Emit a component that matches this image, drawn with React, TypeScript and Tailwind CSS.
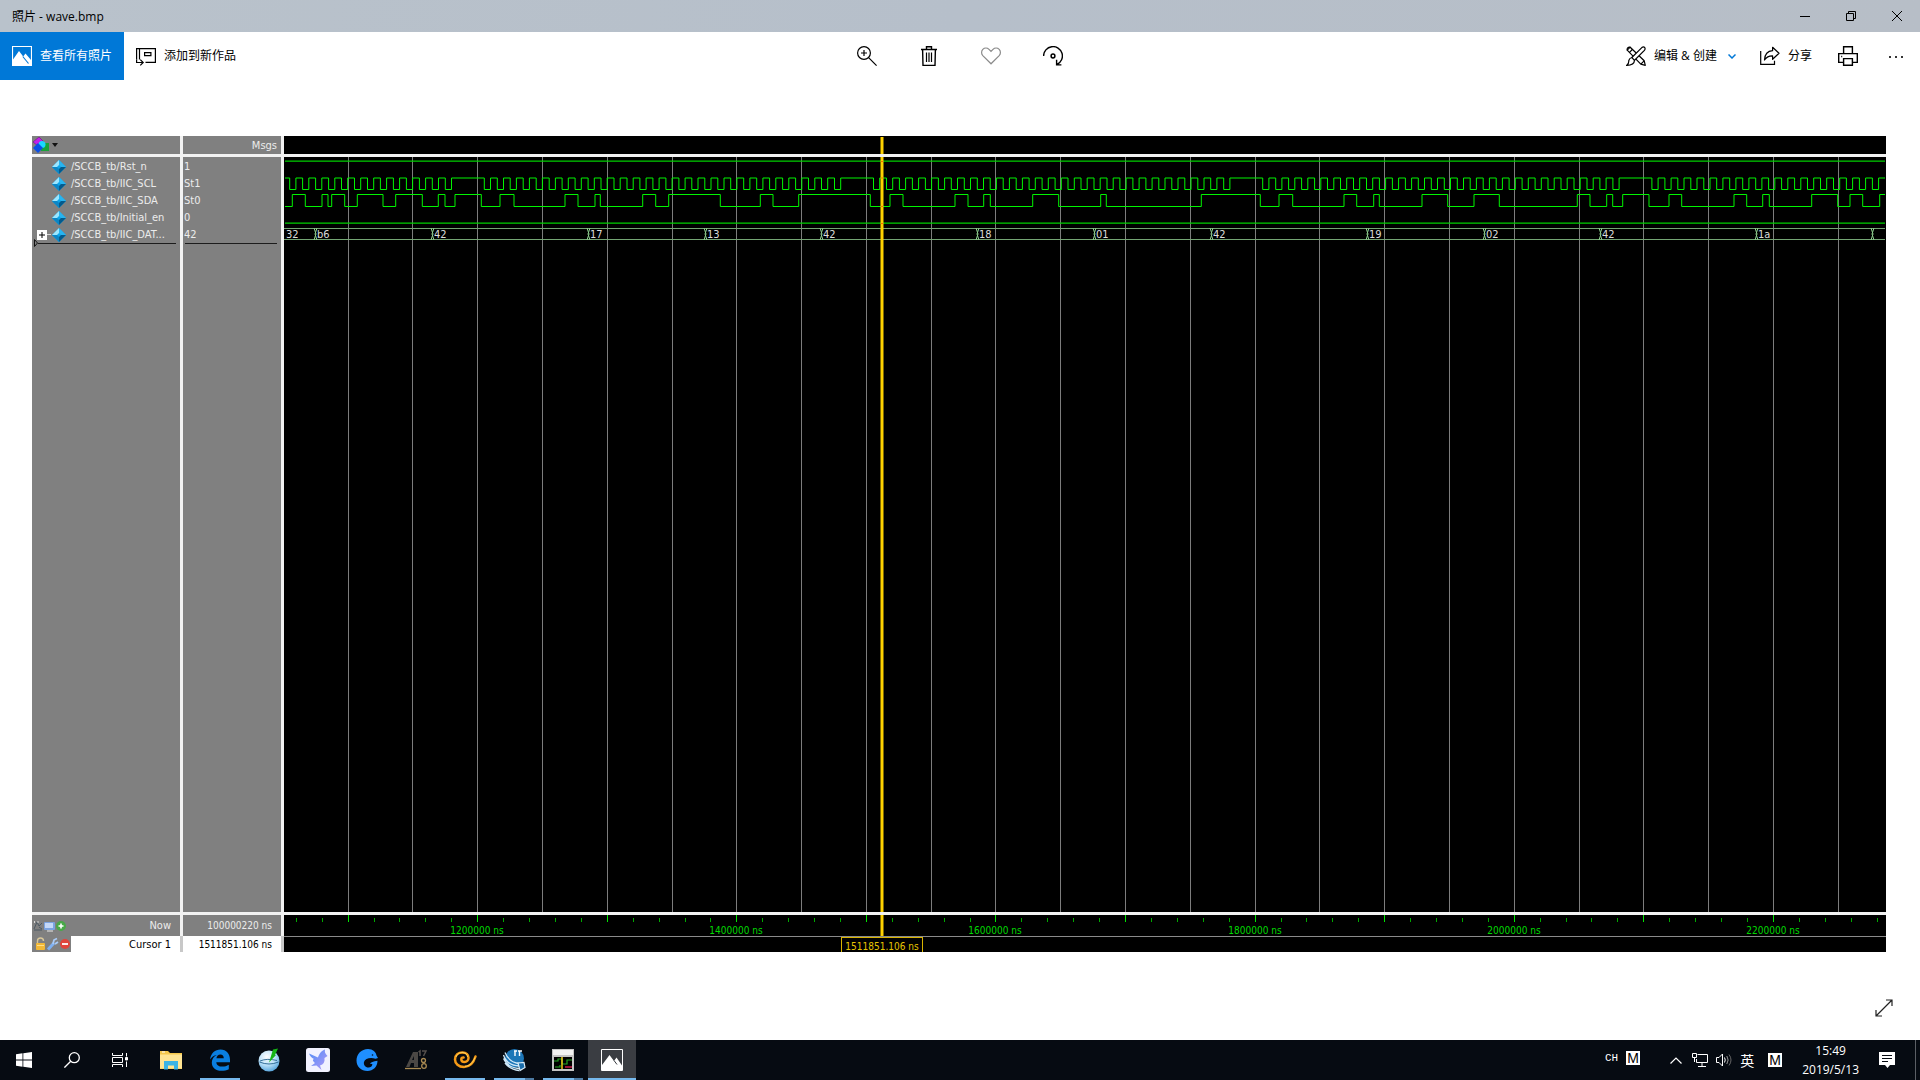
import type { ReactNode } from "react";

const WAVE_FONT = "font-['DejaVu_Sans_Condensed','DejaVu_Sans',sans-serif]";

/* ---------- wave data ---------- */

const ORIGIN = 284;
const GRID = Array.from({ length: 24 }, (_, i) => Math.floor(64.12 + i * 64.785) + 0.5);
const TICKS = Array.from({ length: 62 }, (_, i) => Math.floor(12.292 + i * 25.914) + 0.5);
const CURSOR_X = 598;

const SDA_EDGES = [
  292.3, 305.3, 322, 328, 331.7, 344.7, 357.3, 383, 395.7, 422.3, 438.3, 445, 455, 481.3, 500, 514, 565, 578, 595,
  600.3, 642.7, 655.7, 668.7, 720.3, 760.3, 773, 798.7, 870.3, 890, 903, 955, 968, 983.7, 990.3, 1032.7, 1058.7,
  1100.7, 1106.3, 1201.3, 1260.3, 1279, 1292.7, 1344, 1356.7, 1373.7, 1379.3, 1422, 1447.7, 1474, 1499.3, 1577.3,
  1590, 1606.7, 1612.7, 1622.7, 1649, 1669, 1681.7, 1734, 1746.7, 1762.7, 1769.3, 1811.7, 1837.7, 1850, 1862.7, 1879.7,
].map((x) => x - ORIGIN);

const SCL_EDGES: number[] = [];
for (let frame = -1; frame < 4; frame++) {
  for (let k = 0; k < 28; k++) {
    const fall = 200.3 + frame * 389.2 + k * 12.97;
    if (fall > 2 && fall < 1601) SCL_EDGES.push(fall, fall + 6.2);
  }
}

const BUS: [number, string][] = [
  [31, "b6"],
  [148, "42"],
  [304, "17"],
  [421, "13"],
  [537, "42"],
  [693, "18"],
  [810, "01"],
  [927, "42"],
  [1083, "19"],
  [1200, "02"],
  [1316, "42"],
  [1472, "1a"],
  [1588, ""],
];

const TIMES: [number, string][] = [
  [193, "1200000 ns"],
  [452, "1400000 ns"],
  [711, "1600000 ns"],
  [971, "1800000 ns"],
  [1230, "2000000 ns"],
  [1489, "2200000 ns"],
];

function trace(edges: number[], startHigh: boolean, high: number, low: number, end: number) {
  let level = startHigh;
  let d = `M1 ${level ? high : low}`;
  for (const x of edges) {
    level = !level;
    d += `H${x.toFixed(1)}V${level ? high : low}`;
  }
  return d + `H${end}`;
}

const SIGNALS = [
  { name: "/SCCB_tb/Rst_n", value: "1" },
  { name: "/SCCB_tb/IIC_SCL", value: "St1" },
  { name: "/SCCB_tb/IIC_SDA", value: "St0" },
  { name: "/SCCB_tb/Initial_en", value: "0" },
  { name: "/SCCB_tb/IIC_DAT...", value: "42", bus: true },
];

/* ---------- toolbar icons ---------- */

function Icon({ children, className = "" }: { children: ReactNode; className?: string }) {
  return (
    <svg viewBox="0 0 20 20" className={`size-5 shrink-0 ${className}`} fill="none" stroke="currentColor" strokeWidth="1.2" aria-hidden="true">
      {children}
    </svg>
  );
}

const PhotoIcon = () => (
  <Icon>
    <path d="M.5 .5h19v19H.5z" />
    <path d="M1 13.500 7 5l4.200 5.600L13.500 7.500 19 14v5.500H1z" fill="currentColor" stroke="none" />
    <path d="M10.800 10.500 16.500 17.500" stroke="#0078d7" strokeWidth="1.100" />
  </Icon>
);
const AddIcon = () => (
  <Icon>
    <path d="M.6 13.500V2.600H3.500V13.500M3.500 2.600H19.400V16.400H9.500" />
    <path d="M8.600 6.600h6.300v3H8.600z" />
    <path d="M.6 13.500v3H7M4.300 13.600 7.200 16.500 4.300 19.400" />
  </Icon>
);
const ZoomIcon = () => (
  <Icon>
    <circle cx="7" cy="7" r="6.400" />
    <path d="M11.600 11.600 19.600 19.600M4 7h6M7 4v6" />
  </Icon>
);
const TrashIcon = () => (
  <Icon>
    <path d="M2 3.500H18M7.500 3.500V.7h5v2.800M3.600 3.500 4 19.400H16L16.400 3.500" strokeWidth="1.400" />
    <path d="M7.500 6.500v9.500M10 6.500v9.500M12.500 6.500v9.500" />
  </Icon>
);
const HeartIcon = () => (
  <Icon className="text-[#8a8a8a]">
    <path d="M10 17.800 1.800 9.700C.2 8 .2 5 1.800 3.400 3.500 1.700 6.300 1.700 8 3.400L10 5.400 12 3.400C13.700 1.700 16.500 1.700 18.200 3.400 19.800 5 19.800 8 18.200 9.700Z" />
  </Icon>
);
const RotateIcon = () => (
  <Icon>
    <path d="M.6 10A9.400 9.400 0 1 1 14 18.500M13.600 13.800V18.900H18.400" strokeWidth="1.400" />
    <circle cx="10" cy="10" r="1.900" strokeWidth="1.500" />
  </Icon>
);
const EditIcon = () => (
  <Icon>
    <path d="M1.200 4.200 4.200 1.200 18.200 14.800 19.300 19.300 14.800 18.200Z" strokeLinejoin="round" />
    <path d="M1.200 4.200Q.6 1 4.200 1.200M3.500 6.300 6.300 3.500M14.800 18.200 18.200 14.800" />
    <path
      d="M5.800 11.500 15.800 1.600Q17.500.4 18.700 1.500 19.600 2.800 18.400 4.400L8.500 14.300Q8.300 19.300.8 19.300 3 17.500 2.800 14.500 3.500 12 5.800 11.500Z"
      fill="#fff"
    />
    <path d="M5.800 11.500 8.500 14.300" />
  </Icon>
);
const ShareIcon = () => (
  <Icon>
    <path d="M.7 5V18.400H14.500V14.800" />
    <path d="M12.600 1.300 19 7.300 12.600 13.300V9.900C9 9.800 6.600 10.800 4.500 14 4.800 8.500 7.500 5 12.600 4.700Z" strokeLinejoin="round" />
  </Icon>
);
const PrintIcon = () => (
  <Icon>
    <path d="M5.600 7.600V.7h8.800V7.600M5.600 16.400H.7V7.600H19.300V16.400H14.400M5.600 12.600h8.800V19.300H5.600zM3.200 10.500h1" strokeWidth="1.400" />
  </Icon>
);

/* ---------- wave window pieces ---------- */

const Diamond = () => (
  <svg viewBox="0 0 16 16" className="size-4 shrink-0" aria-hidden="true">
    <path d="M8 1 15 8 8 15 1 8Z" fill="#0aa5ea" />
    <path d="M8 1 1 8H6L8 6Z" fill="#9be6ff" />
    <path d="M8 1 15 8H10L8 6Z" fill="#28b4f0" />
    <path d="M1 8 8 15V10L6 8Z" fill="#0b86c6" />
    <path d="M15 8 8 15V10L10 8Z" fill="#045a8c" />
  </svg>
);

function WavePane() {
  return (
    <svg className="block h-full w-full" role="img" aria-label="Signal waveforms">
      {GRID.map((x) => (
        <line key={x} x1={x} x2={x} y1="0" y2="100%" stroke="#7d7d7d" />
      ))}
      <g fill="none" stroke="#00f400">
        <path d="M1 4.200H1601" stroke="#00d000" strokeWidth="1.200" />
        <path d={trace(SCL_EDGES, true, 21, 32.5, 1601)} />
        <path d={trace(SDA_EDGES, false, 37.5, 49.5, 1601)} />
        <path d="M1 66.200H1601" stroke="#00d000" strokeWidth="1.200" />
      </g>
      <path d="M0 71.500H1601M0 82.500H1601" stroke="#74a574" strokeWidth="1.200" />
      {BUS.map(([x, label]) => (
        <g key={x}>
          <path d={`M${x - 1} 71L${x + 1} 77L${x - 1} 83M${x + 2} 71L${x} 77L${x + 2} 83`} stroke="#8fd08f" fill="none" />
          <text x={x + 2} y="81" className={`${WAVE_FONT} text-[11px]`} fill="#dcdcdc">
            {label}
          </text>
        </g>
      ))}
      <text x="2" y="81" className={`${WAVE_FONT} text-[11px]`} fill="#dcdcdc">
        32
      </text>
      <rect x={CURSOR_X - 1.5} y="0" width="3" height="100%" fill="#ffd200" />
      <path d={`M${CURSOR_X - 1} 4.500h2M${CURSOR_X - 1} 21h2M${CURSOR_X - 1} 49.500h2M${CURSOR_X - 1} 66.500h2`} stroke="#ff6a00" />
    </svg>
  );
}

function Ruler() {
  return (
    <svg className="block h-full w-full" role="img" aria-label="Time scale">
      {TICKS.map((x, i) => (
        <line key={x} x1={x} x2={x} y1={i % 5 === 2 ? 0 : 3} y2="7" stroke={i % 5 === 2 ? "#00e600" : "#00a800"} />
      ))}
      {TIMES.map(([x, label]) => (
        <text key={x} x={x} y="19" textAnchor="middle" className={`${WAVE_FONT} text-[10px]`} fill="#00d800">
          {label}
        </text>
      ))}
      <rect x={CURSOR_X - 1.5} y="0" width="3" height="100%" fill="#ffd200" />
    </svg>
  );
}

function WaveWindow() {
  return (
    <section
      aria-label="wave.bmp"
      className={`grid flex-1 grid-cols-[151px_101px_minmax(0,1fr)] grid-rows-[18px_1fr_24px_16px] bg-[#808080] text-[11px] leading-[17px] text-[#ececec] ${WAVE_FONT}`}
    >
      {/* header */}
      <div className="flex items-center gap-[3px] border-r-3 border-[#f2f2f2] pl-px">
        <svg viewBox="0 0 16 16" className="size-4" aria-hidden="true">
          <path d="M0 5 6 0 11 5 5 9Z" fill="#c21fe8" stroke="#5a1070" strokeWidth=".5" />
          <path d="M8 6h8v8H8z" fill="#19a23a" />
          <circle cx="9" cy="7.500" r="3.500" fill="#19d8ff" />
          <path d="M0 11 5 6 10 11 5 16Z" fill="#0a4fe6" />
        </svg>
        <svg viewBox="0 0 6 4" className="h-1 w-1.5" aria-hidden="true">
          <path d="M0 0h6L3 4z" fill="#111" />
        </svg>
      </div>
      <div className="border-r-3 border-[#f2f2f2] pr-1 text-right leading-[19px]">Msgs</div>
      <div className="bg-black">
        <svg className="block h-full w-full" aria-hidden="true">
          <rect x={CURSOR_X - 1.5} y="1" width="3" height="100%" fill="#ffd200" />
        </svg>
      </div>

      {/* signals */}
      <div className="border-t-3 border-r-3 border-[#f2f2f2]">
        <ul className="pt-px">
          {SIGNALS.map((s) => (
            <li key={s.name} className="flex h-[17px] items-center">
              <span className="flex w-[19px] shrink-0 items-center pl-[5px]">
                {s.bus && (
                  <>
                    <button aria-label="Expand" className="flex size-[10px] shrink-0 items-center justify-center bg-white">
                      <svg viewBox="0 0 6 6" className="size-1.5">
                        <path d="M0 3H6M3 0V6" stroke="#000" />
                      </svg>
                    </button>
                    <span className="h-px w-[5px] bg-[#d8d8d8]" />
                  </>
                )}
              </span>
              <Diamond />
              <span className="pl-1 whitespace-nowrap">{s.name}</span>
            </li>
          ))}
        </ul>
        <div className="-mt-1 flex items-center pr-1">
          <svg viewBox="0 0 4 8" className="ml-0.5 h-2 w-1" aria-hidden="true">
            <path d="M.5.500 3.500 4 .5 7.500Z" fill="none" stroke="#111" />
          </svg>
          <span className="h-px flex-1 bg-[#1c1c1c]" />
        </div>
      </div>
      <div className="border-t-3 border-r-3 border-[#f2f2f2]">
        <ul className="pt-px pl-px">
          {SIGNALS.map((s) => (
            <li key={s.name} className="h-[17px]">
              {s.value}
            </li>
          ))}
        </ul>
        <div className="mr-1 ml-0.5 h-px bg-[#1c1c1c]" />
      </div>
      <div className="min-h-0 border-t-3 border-[#f2f2f2] bg-black">
        <WavePane />
      </div>

      {/* now */}
      <div className="flex items-center justify-between border-t-3 border-r-3 border-[#f2f2f2] pr-[9px]">
        <svg viewBox="0 0 36 12" className="ml-px h-3 w-9" aria-hidden="true">
          <path d="M1 9 4 2 6 6 9 3M1 10H9M6 7 9 9" stroke="#4d5963" fill="none" />
          <path d="M1.500 1v2M5 1v2" stroke="#d8d8d8" />
          <rect x="11" y="2" width="11" height="8" rx="1" fill="#7ba3e0" />
          <rect x="12" y="3" width="8" height="5" fill="#c4d8f8" />
          <path d="M14 11h6" stroke="#e8e8e8" />
          <circle cx="28" cy="6" r="5" fill="#48a848" />
          <path d="M25.500 6h5M28 3.500v5" stroke="#fff" strokeWidth="1.600" />
        </svg>
        <span>Now</span>
      </div>
      <div className="flex items-center justify-end border-t-3 border-r-3 border-[#f2f2f2] pr-[9px] text-[10px]">100000220 ns</div>
      <div className="border-t-3 border-[#f2f2f2] bg-black">
        <Ruler />
      </div>

      {/* cursor */}
      <div className="flex items-center justify-between border-r-3 border-[#c8c8c8] bg-white pr-[9px] text-black">
        <span className="flex h-full w-[39px] items-center bg-[#808080] pl-[3px]">
          <svg viewBox="0 0 36 14" className="h-3.5 w-9" aria-hidden="true">
            <path d="M2.500 7V4a3 3 0 0 1 6 0" stroke="#d8c79a" strokeWidth="1.400" fill="none" />
            <rect x="1" y="6" width="9" height="7" rx="1" fill="#f2b838" />
            <path d="M2 8.500H9" stroke="#ffe08a" />
            <path d="M13 12.500 19 6" stroke="#7fb0f0" strokeWidth="3" />
            <path d="M18 7 19 3 22 1.500M20 7 23 5" stroke="#a9cbf7" strokeWidth="1.800" fill="none" />
            <circle cx="30" cy="7" r="5" fill="#e0453c" />
            <path d="M27 7h6" stroke="#fff" strokeWidth="1.800" />
          </svg>
        </span>
        <span>Cursor 1</span>
      </div>
      <div className="flex items-center justify-end border-r-3 border-[#c8c8c8] bg-white pr-[9px] text-[10px] text-black">1511851.106 ns</div>
      <div className="overflow-hidden border-t border-[#8a8a8a] bg-black">
        <svg className="block h-full w-full" role="img" aria-label="Cursor position">
          <rect x="557.5" y=".5" width="81" height="18" fill="none" stroke="#d9b400" />
          <text x={CURSOR_X} y="13" textAnchor="middle" className="text-[10px]" fill="#e6c400">
            1511851.106 ns
          </text>
        </svg>
      </div>
    </section>
  );
}

/* ---------- taskbar ---------- */

function Art({ children }: { children: ReactNode }) {
  return (
    <svg viewBox="0 0 24 24" className="size-6" aria-hidden="true">
      {children}
    </svg>
  );
}

const APPS: { name: string; state?: "open" | "multi" | "active"; art: ReactNode }[] = [
  {
    name: "文件资源管理器",
    art: (
      <Art>
        <path d="M1 3h8l2 2h12v16H1z" fill="#f5c84c" />
        <path d="M1 6.500h22v14H1z" fill="#ffe593" />
        <path d="M3 4h3" stroke="#fff" />
        <path d="M5 21.500V13h14v8.500h-4V17.500H9v4z" fill="#3bb4e5" />
      </Art>
    ),
  },
  {
    name: "Edge",
    state: "open",
    art: (
      <Art>
        <path
          d="M2 11.500C3 5 7 1.500 12.500 1.500 18.500 1.500 22 5.800 22 11.800V14.200H8.300C8.500 17.200 11 18.600 14.200 18.600 16.800 18.600 18.800 17.900 20.800 16.700V21.200C18.500 22.300 16.200 22.800 13.400 22.800 7.500 22.800 3.800 19.500 3.800 14.500 3.800 11 5.700 8.300 8.800 6.900 5.800 7.300 3.500 9 2 11.500ZM8.400 10.200H15.800C15.800 7.700 14.500 6.400 12.400 6.400 10.200 6.400 8.800 7.900 8.400 10.200Z"
          fill="#0a7fe0"
        />
      </Art>
    ),
  },
  {
    name: "Browser",
    art: (
      <Art>
        <defs>
          <radialGradient id="ball" cx=".4" cy=".3" r=".8">
            <stop offset="0" stopColor="#fff" />
            <stop offset=".5" stopColor="#b9e0f8" />
            <stop offset="1" stopColor="#3f97d6" />
          </radialGradient>
        </defs>
        <circle cx="12" cy="13" r="10.500" fill="url(#ball)" />
        <path d="M2.500 14Q12 18 21.500 14M3 13Q10 10 20 12.500" stroke="#25628f" fill="none" strokeWidth=".9" />
        <path d="M12 14.500 16 1.500 21 .5 18 7H19Z" fill="#16b416" />
      </Art>
    ),
  },
  {
    name: "Thunder",
    art: (
      <Art>
        <defs>
          <linearGradient id="bird" x1="0" y1="0" x2="1" y2="1">
            <stop offset="0" stopColor="#4c8cf5" />
            <stop offset="1" stopColor="#b49af8" />
          </linearGradient>
        </defs>
        <rect width="24" height="24" rx="2.500" fill="#f1f2ff" />
        <path d="M3 5.500 12 9.500C13 6 15.500 2.500 19 1.500 18.500 4 19 5.500 21.500 8L18.500 10C19 14 17.500 16.500 14 17.500L15.500 22 10.500 17.500 5 18 9 15C6.500 13 6.500 11.500 8 11 5.500 10 4 8 3 5.500Z" fill="url(#bird)" />
      </Art>
    ),
  },
  {
    name: "Dolphin",
    art: (
      <Art>
        <path d="M13 1C18 1 21 4 21.500 7.500L23 10 20.500 10.800C15.500 9 10 10.500 9 14 8.300 17 10.500 19.800 14 19.500 16.500 19 17.500 17.500 17.300 16L15 15.800Q16 13.800 22.500 12.800C22.500 19 18 23 12.500 23 6 23 1.500 18.500 1.500 12.500 1.500 6 6.500 1 13 1Z" fill="#1f8fff" />
        <circle cx="17.500" cy="7" r=".8" fill="#06101c" />
      </Art>
    ),
  },
  {
    name: "Altium",
    art: (
      <Art>
        <path d="M2 19 9 4H14V19H10V15H7L5.500 19ZM8 12H10V8Z" fill="#4b4845" fillRule="evenodd" />
        <path d="M14.500 4 16 3V8M18 3h4L19.500 8" stroke="#55504d" strokeWidth="1.500" fill="none" />
        <circle cx="19.500" cy="12.500" r="2" fill="none" stroke="#a98a52" strokeWidth="1.300" />
        <circle cx="20" cy="18" r="2.300" fill="none" stroke="#a98a52" strokeWidth="1.300" />
        <path d="M1 20.500H17" stroke="#a98a52" strokeWidth="1.300" />
      </Art>
    ),
  },
  {
    name: "Everything",
    state: "open",
    art: (
      <Art>
        <path
          d="M22.500 8.500C20.500 15 17 19 11 19 5.500 19 2 15.500 2 11.500 2 7 5.500 4.500 9.500 4.500 13.500 4.500 15.500 7 15.500 9.800 15.500 12.500 13.500 14 11.500 14 9.500 14 8.300 12.800 8.300 11.200 8.300 10 9.400 9.200 10.600 9.500"
          fill="none"
          stroke="#f59a16"
          strokeWidth="2.500"
          strokeLinecap="round"
        />
        <path d="M3 9C4 6 7 4 10 4.500 13 4.800 14.500 7 14.500 9M22 9.500C20 14.500 17 18 12 18.300" fill="none" stroke="#ffd35c" strokeWidth="1" />
      </Art>
    ),
  },
  {
    name: "Quartus",
    state: "multi",
    art: (
      <Art>
        <circle cx="12.500" cy="10.500" r="9.500" fill="#1d77b8" />
        <path d="M12 3h3M13 3v5M16 3h4M17.500 3v5" stroke="#fff" strokeWidth="1.400" />
        <path d="M1.500 7C4 15 10 18 18 18M1.500 10.500C4.500 17 10 20 17 20.500M3 15C6 19 11 22 17 22.500M3 4.500C6 12 11 15 18 15.500" stroke="#cfe8f8" strokeWidth="1.300" fill="none" />
        <path d="M16 15 22 14.500 23 19.500 18 22.500Z" fill="#1b6eac" stroke="#d8ecf8" strokeWidth="1.200" />
      </Art>
    ),
  },
  {
    name: "ModelSim",
    state: "multi",
    art: (
      <Art>
        <path d="M1 1h22v22H1z" fill="#c4c4c4" />
        <path d="M2 2h20v5H2z" fill="#f2f2f2" />
        <path d="M3 9h18v12H3z" fill="#000" />
        <path d="M3 13h4v-2h4v5h5v-4h5M4 19h5v-2" stroke="#24a824" fill="none" strokeWidth="1.200" />
        <path d="M11 9v12" stroke="#f0c818" strokeWidth="1.500" />
        <path d="M14 19h7" stroke="#c81848" strokeWidth="1.500" />
      </Art>
    ),
  },
  {
    name: "照片",
    state: "active",
    art: (
      <Art>
        <path d="M1.500 1.500h21v21h-21z" fill="#3a3d42" stroke="#fff" />
        <path d="M2 17 9.500 7 14 13 16.500 9.500 22 17.500V22H2z" fill="#fff" />
        <path d="M14 12.500 17 16.500" stroke="#3a3d42" />
      </Art>
    ),
  },
];

function TaskApp({ app }: { app: (typeof APPS)[number] }) {
  return (
    <button aria-label={app.name} className={`relative flex h-10 w-12 items-center justify-center ${app.state === "active" ? "bg-[#3a3d42]" : ""}`}>
      {app.art}
      {app.state === "open" && <span className="absolute bottom-0 left-1 h-0.5 w-10 bg-[#76b9ed]" />}
      {app.state === "multi" && <span className="absolute bottom-0 left-1 h-0.5 w-10 border-r-9 border-[#4d7ba3] bg-[#76b9ed]" />}
      {app.state === "active" && <span className="absolute inset-x-0 bottom-0 h-0.5 bg-[#76b9ed]" />}
    </button>
  );
}

function Taskbar() {
  return (
    <footer className="flex h-10 items-center bg-[#060b12] text-white">
      <button aria-label="开始" className="flex h-10 w-12 items-center justify-center">
        <svg viewBox="0 0 16 16" className="size-4" fill="#fff">
          <path d="M0 2.200 6.500 1.300V7.500H0zM7.300 1.200 16 0V7.500H7.300zM0 8.400H6.500V14.700L0 13.800zM7.300 8.400H16V16L7.300 14.800z" />
        </svg>
      </button>
      <button aria-label="搜索" className="flex h-10 w-12 items-center justify-center">
        <svg viewBox="0 0 16 16" className="size-4" fill="none" stroke="#fff" strokeWidth="1.300">
          <circle cx="10.300" cy="5.700" r="5" />
          <path d="M6.700 9.300.4 15.600" />
        </svg>
      </button>
      <button aria-label="任务视图" className="flex h-10 w-12 items-center justify-center">
        <svg viewBox="0 0 16 16" className="size-4" fill="none" stroke="#fff">
          <path d="M.5 1v2.500h10V1M.5 15v-2.500h10V15M.5 5.500h10v5H.5zM14.500 1v3.500M14.500 9.500V15" />
          <path d="M13.500 5.500h2v2.500h-2z" fill="#fff" />
        </svg>
      </button>
      <nav className="ml-[3px] flex gap-px" aria-label="Apps">
        {APPS.map((a) => (
          <TaskApp key={a.name} app={a} />
        ))}
      </nav>

      <div className="ml-auto flex h-10 items-center">
        <span className="mb-1 font-['Liberation_Mono',monospace] text-[11px] leading-4">CH</span>
        <span className="mr-6 mb-1 ml-2 flex size-3.5 items-center justify-center bg-white font-['Liberation_Sans',sans-serif] text-[14px] leading-[14px] text-black">M</span>
        <button aria-label="显示隐藏的图标" className="flex h-10 w-6 items-center justify-center">
          <svg viewBox="0 0 12 7" className="h-[7px] w-3" fill="none" stroke="#fff" strokeWidth="1.200">
            <path d="M.5 6.500 6 1l5.500 5.500" />
          </svg>
        </button>
        <button aria-label="网络" className="flex h-10 w-6 items-center justify-center">
          <svg viewBox="0 0 16 14" className="h-3.5 w-4" fill="none" stroke="#fff">
            <path d="M5.500 1.500h10v8H4.500V6M.5.500h4v4h-4zM2.500 4.500V9M10 9.500V13M6 13.500h8" />
          </svg>
        </button>
        <button aria-label="音量" className="flex h-10 w-6 items-center justify-center">
          <svg viewBox="0 0 16 14" className="h-3.5 w-4" fill="none" stroke="#fff">
            <path d="M.5 4.500H3L6.500 1V13L3 9.500H.5zM8.500 4.500q1.500 2.500 0 5" />
            <path d="M10.800 3q2.700 4 0 8" stroke="#999" />
            <path d="M13 1.500q4 5.500 0 11" stroke="#666" />
          </svg>
        </button>
        <button className="ml-1 font-['Noto_Sans_CJK_SC',sans-serif] text-[14px] leading-5">英</button>
        <span className="ml-3.5 flex size-3.5 items-center justify-center bg-white font-['Liberation_Sans',sans-serif] text-[14px] leading-[14px] text-black">M</span>
        <time className="ml-5 block text-center font-['Open_Sans','Noto_Sans',sans-serif] text-[12px] leading-[19px]">
          15:49
          <br />
          2019/5/13
        </time>
        <button aria-label="通知" className="ml-5 flex h-10 items-center">
          <svg viewBox="0 0 16 16" className="size-4">
            <path d="M0 0h16v13h-5l-2.500 3L6 13H0z" fill="#fff" />
            <path d="M3 3.500h10M3 6.500h10M3 9.500h6" stroke="#060b12" />
          </svg>
        </button>
        <span className="mr-1 ml-5 h-10 w-px bg-[#5b5f65]" />
      </div>
    </footer>
  );
}

/* ---------- page ---------- */

export default function App() {
  return (
    <div className="flex min-h-screen flex-col bg-white font-['Open_Sans','Noto_Sans_CJK_SC',sans-serif] text-xs text-black">
      <header className="flex h-8 items-center justify-between bg-linear-to-r from-[#b9c2cb] via-[#b6bfca] to-[#b7bec7] pl-3">
        <h1 className="pt-0.5 leading-5">照片 - wave.bmp</h1>
        <div className="flex">
          <button aria-label="最小化" className="flex h-8 w-[46px] items-center justify-center">
            <span className="h-px w-2.5 bg-black" />
          </button>
          <button aria-label="还原" className="flex h-8 w-[46px] items-center justify-center">
            <svg viewBox="0 0 10 10" className="size-2.5" fill="none" stroke="#000">
              <path d="M.5 2.500h7v7h-7zM2.500 2.500v-2h7v7h-2" />
            </svg>
          </button>
          <button aria-label="关闭" className="flex h-8 w-[46px] items-center justify-center">
            <svg viewBox="0 0 10 10" className="size-2.5" fill="none" stroke="#000">
              <path d="M0 0 10 10M10 0 0 10" />
            </svg>
          </button>
        </div>
      </header>

      <div className="grid h-12 grid-cols-[1fr_auto_1fr]">
        <div className="flex">
          <button className="flex items-center gap-2 bg-[#0078d7] px-3 text-white">
            <PhotoIcon />
            查看所有照片
          </button>
          <button className="flex items-center gap-2 px-3">
            <AddIcon />
            添加到新作品
          </button>
        </div>
        <div className="flex">
          {[
            ["放大", <ZoomIcon key="z" />],
            ["删除", <TrashIcon key="t" />],
            ["收藏", <HeartIcon key="h" />],
            ["旋转", <RotateIcon key="r" />],
          ].map(([label, icon]) => (
            <button key={label as string} aria-label={label as string} className="flex w-[62px] items-center justify-center">
              {icon}
            </button>
          ))}
        </div>
        <div className="flex justify-end">
          <button className="flex items-center gap-2 px-3">
            <EditIcon />
            <span className="min-w-[66px] text-left">编辑 &amp; 创建</span>
            <svg viewBox="0 0 8 5" className="h-[5px] w-2" fill="none" stroke="#0078d7" strokeWidth="1.500">
              <path d="M.5.500 4 4 7.500.500" />
            </svg>
          </button>
          <button className="flex items-center gap-2 px-3">
            <ShareIcon />
            分享
          </button>
          <button aria-label="打印" className="flex w-12 items-center justify-center">
            <PrintIcon />
          </button>
          <button aria-label="更多" className="flex w-12 items-center justify-center gap-1 pt-0.5">
            <span className="size-0.5 bg-[#333]" />
            <span className="size-0.5 bg-[#333]" />
            <span className="size-0.5 bg-[#333]" />
          </button>
        </div>
      </div>

      <main className="relative flex flex-1 flex-col pt-14 pr-[34px] pb-[88px] pl-8">
        <WaveWindow />
        <button aria-label="全屏" className="absolute right-[27px] bottom-[23px]">
          <svg viewBox="0 0 18 18" className="size-[18px]" fill="none" stroke="#222" strokeWidth="1.200">
            <path d="M1 17 17 1M11 1H17V7M1 11V17H7" />
          </svg>
        </button>
      </main>

      <Taskbar />
    </div>
  );
}
